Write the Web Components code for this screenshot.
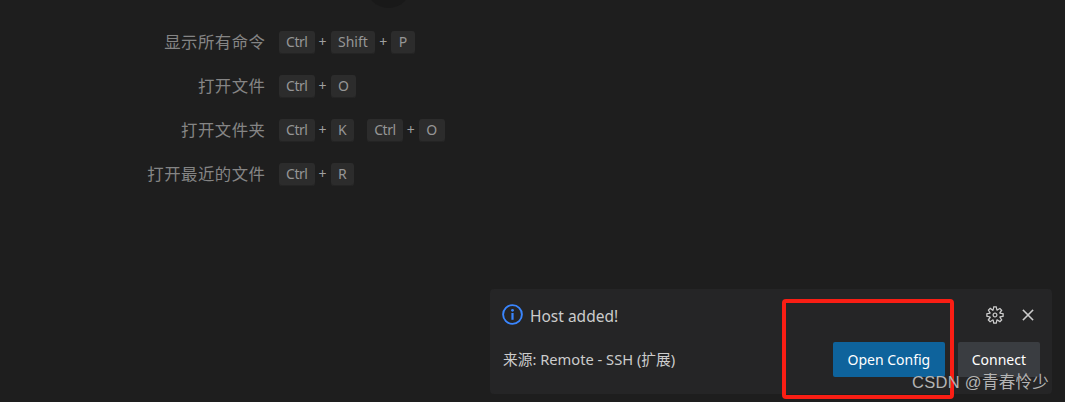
<!DOCTYPE html>
<html lang="zh">
<head>
<meta charset="utf-8">
<title>Welcome</title>
<style>
	html, body { margin: 0; background: #1e1e1e; }
	body { font-family: "Noto Sans", "Noto Sans CJK SC", sans-serif; }
</style>
</head>
<body>
<editor-page>
	<watermark-list slot="watermark">
		<shortcut-row label="显示所有命令"><key-cap tight>Ctrl</key-cap><key-plus></key-plus><key-cap>Shift</key-cap><key-plus></key-plus><key-cap>P</key-cap></shortcut-row>
		<shortcut-row label="打开文件"><key-cap tight>Ctrl</key-cap><key-plus></key-plus><key-cap>O</key-cap></shortcut-row>
		<shortcut-row label="打开文件夹"><key-cap tight>Ctrl</key-cap><key-plus></key-plus><key-cap>K</key-cap><key-gap></key-gap><key-cap tight>Ctrl</key-cap><key-plus></key-plus><key-cap>O</key-cap></shortcut-row>
		<shortcut-row label="打开最近的文件"><key-cap tight>Ctrl</key-cap><key-plus></key-plus><key-cap>R</key-cap></shortcut-row>
	</watermark-list>
	<notification-toast slot="toast" message="Host added!" source="来源: Remote - SSH (扩展)">
		<toast-button primary>Open Config</toast-button>
		<toast-button>Connect</toast-button>
	</notification-toast>
</editor-page>

<script>
	function define(name, html) {
		customElements.define(name, class extends HTMLElement {
			constructor() {
				super();
				this.attachShadow({ mode: 'open' });
			}

			connectedCallback() {
				this.shadowRoot.innerHTML = html(this);
			}
		});
	}

	define('editor-page', () => `
		<style>
			:host { display: flex; flex-direction: column; position: relative; width: 1065px; height: 402px; overflow: hidden; background: #1e1e1e; }
			.logo { position: absolute; left: 366px; top: -37px; width: 45px; height: 45px; border-radius: 50%; background: #191919; }
			.toast-area { display: flex; justify-content: flex-end; margin-top: auto; padding: 0 13px 8px 0; }
			.annotation { position: absolute; left: 782px; top: 299px; width: 164px; height: 92px; border: 4px solid #fa1e14; border-radius: 4px; }
			.credit { position: absolute; left: 912px; top: 371px; font: 16.5px/22px "Liberation Sans", "Noto Sans CJK SC", sans-serif; color: #b4b4b4; letter-spacing: 0.3px; white-space: nowrap; }
		</style>
		<div class="logo"></div>
		<slot name="watermark"></slot>
		<div class="toast-area"><slot name="toast"></slot></div>
		<div class="annotation"></div>
		<div class="credit">CSDN @青春怜少</div>
	`);

	define('watermark-list', () => `
		<style>
			:host { display: grid; grid-template-columns: 265px auto; justify-content: start; column-gap: 14px; row-gap: 21px; padding-top: 30px; }
		</style>
		<slot></slot>
	`);

	define('shortcut-row', (el) => `
		<style>
			:host { display: grid; grid-template-columns: subgrid; grid-column: 1 / -1; align-items: center; height: 23px; }
			.label { justify-self: end; padding-bottom: 3px; font: 16.4px/20px "Noto Sans CJK SC", sans-serif; letter-spacing: 0.5px; margin-right: -0.5px; color: #858585; white-space: nowrap; }
			.keys { display: flex; align-items: center; }
		</style>
		<div class="label">${el.getAttribute('label')}</div>
		<div class="keys"><slot></slot></div>
	`);

	define('key-cap', () => `
		<style>
			:host { display: block; box-sizing: border-box; height: 23px; padding: 0 7.5px; font: 14px/21px "Noto Sans", sans-serif; color: #969696; background: #2c2c2c; border-radius: 3px; box-shadow: inset 0 -1px 0 #242424; }
			:host([tight]) { padding: 0 7px; letter-spacing: -0.45px; }
		</style>
		<slot></slot>
	`);

	define('key-plus', () => `
		<style>
			:host { display: block; width: 16px; text-align: center; font: 14px/24px "Noto Sans", sans-serif; color: #a0a0a0; }
		</style>
		+
	`);

	define('key-gap', () => `
		<style>
			:host { display: block; width: 13px; }
		</style>
	`);

	define('notification-toast', (el) => `
		<style>
			:host { display: flex; flex-direction: column; box-sizing: border-box; width: 562px; height: 105px; padding: 14px 12px 0; background: #252526; border-radius: 4px; font: 14px/20px "Noto Sans", "Noto Sans CJK SC", sans-serif; color: #cccccc; }
			.top { display: flex; align-items: center; height: 24px; gap: 7px; }
			.info { margin-top: -2px; }
			.message { flex: 1; padding-top: 2px; font-size: 15.5px; }
			.actions { display: flex; align-items: center; gap: 12.5px; margin-right: 2.5px; }
			.bottom { display: flex; align-items: center; justify-content: space-between; margin-top: 15px; height: 34px; }
			.source { margin-left: 1px; font-size: 14.7px; }
			.buttons { display: flex; gap: 13px; }
			svg { display: block; }
		</style>
		<div class="top">
			<svg class="info" width="21" height="21" viewBox="0 0 21 21" fill="none">
				<circle cx="10.5" cy="10.5" r="9.4" stroke="#3a86ff" stroke-width="1.9"/>
				<circle cx="10.5" cy="6.3" r="1.4" fill="#3a86ff"/>
				<rect x="9.4" y="9" width="2.2" height="6.8" fill="#3a86ff"/>
			</svg>
			<div class="message">${el.getAttribute('message')}</div>
			<div class="actions">
				<svg width="20" height="20" viewBox="0 0 16 16" fill="#cccccc">
					<path fill-rule="evenodd" d="M9.1 4.4L8.6 2H7.4l-.5 2.4-.7.3-2-1.3-.9.8 1.3 2-.2.7-2.4.5v1.2l2.4.5.3.8-1.3 2 .8.8 2-1.3.8.3.4 2.3h1.2l.5-2.4.8-.3 2 1.3.8-.8-1.3-2 .3-.8 2.3-.4V7.4l-2.4-.5-.3-.8 1.3-2-.8-.8-2 1.3-.7-.2zM9.4 1l.5 2.4L12 2.1l2 2-1.4 2.1 2.4.4v2.8l-2.4.5L14 12l-2 2-2.1-1.4-.5 2.4H6.6l-.5-2.4L4 13.9l-2-2 1.4-2.1L1 9.4V6.6l2.4-.5L2.1 4l2-2 2.1 1.4.4-2.4h2.8zm.6 7c0 1.1-.9 2-2 2s-2-.9-2-2 .9-2 2-2 2 .9 2 2zM8 9c.6 0 1-.4 1-1s-.4-1-1-1-1 .4-1 1 .4 1 1 1z"/>
				</svg>
				<svg width="20" height="20" viewBox="0 0 16 16" fill="#cccccc" stroke="#cccccc" stroke-width="0.25">
					<path d="M8 8.707l3.646 3.647.708-.707L8.707 8l3.647-3.646-.707-.708L8 7.293 4.354 3.646l-.707.708L7.293 8l-3.646 3.646.707.708L8 8.707z"/>
				</svg>
			</div>
		</div>
		<div class="bottom">
			<div class="source">${el.getAttribute('source')}</div>
			<div class="buttons"><slot></slot></div>
		</div>
	`);

	define('toast-button', () => `
		<style>
			:host { display: block; box-sizing: border-box; height: 35px; padding: 0 14.5px; font: 14px/35px "Noto Sans", sans-serif; border-radius: 2px; white-space: nowrap; }
			:host([primary]) { background: #0e639c; color: #ffffff; }
			:host(:not([primary])) { padding: 0 14px; background: #3a3d41; color: #ffffff; }
		</style>
		<slot></slot>
	`);
</script>
</body>
</html>
